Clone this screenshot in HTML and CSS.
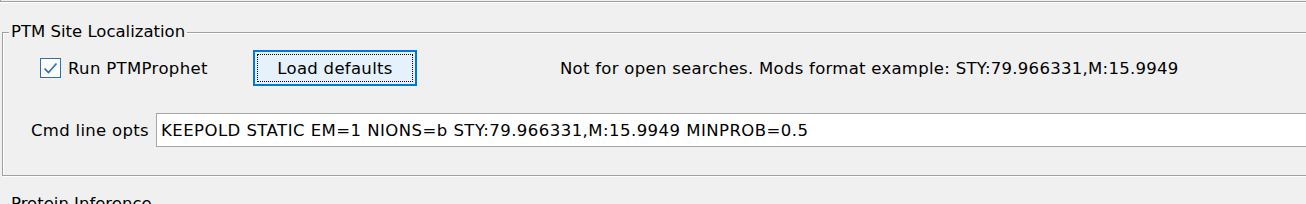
FILE: index.html
```html
<!DOCTYPE html>
<html lang="en">
<head>
    <meta charset="UTF-8">
    <title>PTM Site Localization</title>
    <link rel="stylesheet" href="styles.css">
</head>
<body>

<div class="prev-panel"></div>

<fieldset class="group">
    <legend>PTM Site Localization</legend>

    <div class="row row-run">
        <label class="check">
            <span class="check-box">
                <svg width="19" height="18" viewBox="0 0 19 18"><polyline points="3.5,9.5 7.5,13.5 15.5,4.5" fill="none" stroke="#2f6db4" stroke-width="1.7"/></svg>
            </span>
            Run PTMProphet
        </label>
        <button class="btn" type="button">Load defaults</button>
        <span class="note">Not for open searches. Mods format example: STY:79.966331,M:15.9949</span>
    </div>

    <div class="row row-opts">
        <label class="opts-label" for="cmdOpts">Cmd line opts</label>
        <input class="opts-input" id="cmdOpts" type="text" value="KEEPOLD STATIC EM=1 NIONS=b STY:79.966331,M:15.9949 MINPROB=0.5">
    </div>
</fieldset>

<fieldset class="group group-next">
    <legend>Protein Inference</legend>
</fieldset>

</body>
</html>
```

FILE: styles.css
```css
*{
    margin:0;
    padding:0;
    box-sizing: border-box;
}

body{
    background-color: #f0f0f0;
    color: #000;
    font-family: "DejaVu Sans", sans-serif;
    font-size: 16.5px;
    overflow: hidden;
    width: 1306px;
    height: 204px;
}

/* bottom edge of the panel above */
.prev-panel{
    width: 1340px;
    height: 2px;
    border-left: 1px solid #a0a0a0;
    border-bottom: 1px solid #a0a0a0;
    box-shadow: 0 1px 0 #fff;
}

.group{
    width: 1340px;
    margin: 20px 0 0 2px;
    padding: 8px 0 28px 0;
    border: 1px solid #a0a0a0;
    box-shadow: inset 1px 1px 0 #fff, 1px 1px 0 #fff;
}

.group legend{
    margin-left: 6px;
    padding: 0 2px;
    line-height: 20px;
    background-color: #f0f0f0;
}

.group-next{
    margin-top: 18px;
    height: 60px;
}

.row{
    display: flex;
    align-items: center;
}

.row-run{
    height: 36px;
}

.check{
    display: flex;
    align-items: center;
    width: 213px;
    margin-left: 37px;
    letter-spacing: 0.35px;
}

.check-box{
    display: inline-block;
    width: 21px;
    height: 20px;
    margin-right: 7px;
    border: 1px solid #2f6db4;
    background-color: #fff;
}

.check-box svg{
    display: block;
}

.btn{
    width: 164px;
    height: 36px;
    font-family: inherit;
    font-size: inherit;
    letter-spacing: 0.3px;
    color: #000;
    background-color: #e5f1fb;
    border: 2px solid #0078d7;
    outline: 1px dotted #000;
    outline-offset: -5px;
}

.note{
    margin-left: 143px;
    white-space: nowrap;
    letter-spacing: 0.28px;
}

.row-opts{
    margin-top: 27px;
}

.opts-label{
    width: 125px;
    margin-left: 28px;
    letter-spacing: 0.3px;
}

.opts-input{
    width: 1200px;
    height: 34px;
    padding-left: 4px;
    font-family: inherit;
    font-size: inherit;
    letter-spacing: 0.46px;
    color: #000;
    background-color: #fff;
    border: 1px solid #a5a5a5;
    outline: none;
}
```
